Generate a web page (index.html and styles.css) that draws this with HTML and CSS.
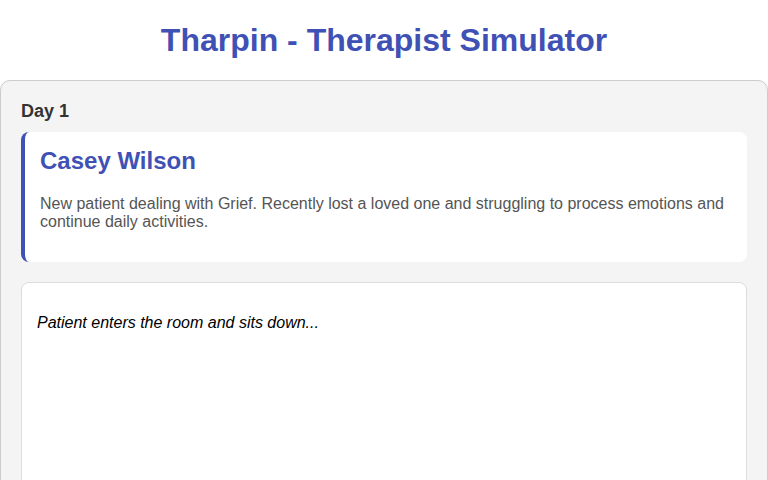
FILE: index.html
```html
<!DOCTYPE html>
<html lang="en">
<head>
    <meta charset="UTF-8">
    <title>Tharpin - Therapist Simulator</title>
    <link rel="stylesheet" href="styles.css">
</head>
<body>
    <h1>Tharpin - Therapist Simulator</h1>

    <div class="game-container">
        <h3 class="day">Day 1</h3>

        <div class="patient-card">
            <h2>Casey Wilson</h2>
            <p>New patient dealing with Grief. Recently lost a loved one and struggling to process emotions and continue daily activities.</p>
        </div>

        <div class="dialogue" id="dialogue">
            <p class="narration">Patient enters the room and sits down...</p>
        </div>
    </div>
</body>
</html>
```

FILE: styles.css
```css
body {
    font-family: "Liberation Sans", Arial, sans-serif;
    margin: 0;
    background-color: #fff;
    color: #333;
}
h1 {
    text-align: center;
    color: #3f51b5;
    font-size: 32px;
    margin: 21px 0;
    line-height: 38px;
}
.game-container {
    background-color: #f4f4f4;
    border: 1px solid #ccc;
    border-radius: 10px;
    padding: 20px;
    min-height: 600px;
}
.day {
    font-size: 18px;
    margin: 0 0 10px;
    color: #333;
}
.patient-card {
    background-color: #fff;
    border-left: 4px solid #3f51b5;
    border-radius: 8px;
    padding: 15px;
    margin-bottom: 20px;
}
.patient-card h2 {
    color: #3f51b5;
    font-size: 24px;
    margin: 0 0 20px;
}
.patient-card p {
    color: #555;
    font-size: 16px;
    margin: 0 0 16px;
}
.dialogue {
    background-color: #fff;
    border: 1px solid #ddd;
    border-radius: 8px;
    padding: 15px;
    min-height: 300px;
}
.narration {
    font-style: italic;
    color: #000;
    margin: 16px 0;
}
```
